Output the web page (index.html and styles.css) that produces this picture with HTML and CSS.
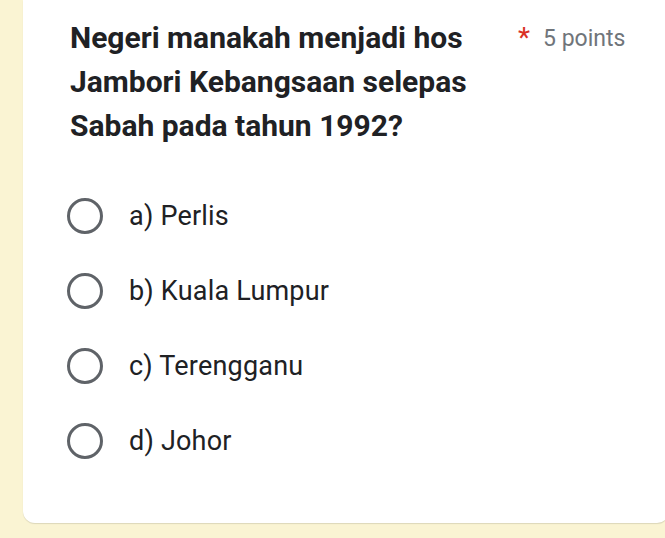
FILE: index.html
```html
<!DOCTYPE html>
<html>
<head>
<meta charset="utf-8">
<link rel="stylesheet" href="styles.css">
</head>
<body>
<div class="page">
  <div class="card">
    <div class="header">
      <div class="title">Negeri manakah menjadi hos Jambori Kebangsaan selepas Sabah pada tahun 1992?</div>
      <div class="meta"><span class="req">*</span><span class="points">5 points</span></div>
    </div>
    <div class="options">
      <div class="option"><span class="radio"></span><span class="label">a) Perlis</span></div>
      <div class="option"><span class="radio"></span><span class="label">b) Kuala Lumpur</span></div>
      <div class="option"><span class="radio"></span><span class="label">c) Terengganu</span></div>
      <div class="option"><span class="radio"></span><span class="label">d) Johor</span></div>
    </div>
  </div>
</div>
</body>
</html>
```
FILE: styles.css
```css
html, body {
  margin: 0;
  padding: 0;
}
body {
  background: #faf4d3;
  font-family: Roboto, "Noto Sans", sans-serif;
  width: 665px;
  height: 538px;
  overflow: hidden;
}
.page {
  padding: 0 0 15px 23px;
}
.card {
  background: #ffffff;
  height: 523px;
  margin-right: -4px;
  border-radius: 0 0 12px 12px;
  box-shadow: 0 1px 1px rgba(0,0,0,0.12);
  box-sizing: border-box;
  padding: 16px 0 0 47px;
}
.header {
  display: flex;
  align-items: flex-start;
}
.title {
  width: 420px;
  font-size: 30px;
  font-weight: 700;
  line-height: 44px;
  color: #202124;
}
.meta {
  display: flex;
  align-items: flex-start;
  margin-left: 28px;
  padding-top: 8px;
}
.req {
  color: #d93025;
  font-size: 28px;
  line-height: 28px;
  margin-right: 13px;
}
.points {
  color: #70757a;
  font-size: 23px;
  line-height: 30px;
}
.options {
  margin-top: 50px;
  display: flex;
  flex-direction: column;
  gap: 39px;
}
.option {
  display: flex;
  align-items: center;
  height: 36px;
}
.radio {
  width: 30px;
  height: 30px;
  border: 3px solid #5f6368;
  border-radius: 50%;
  margin-left: -3px;
}
.label {
  margin-left: 26px;
  font-size: 27px;
  letter-spacing: 0.2px;
  color: #202124;
}
```
